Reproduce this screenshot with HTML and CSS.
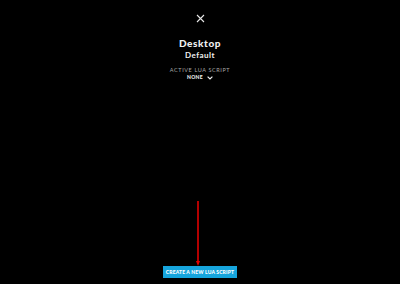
FILE: index.html
```html
<!DOCTYPE html>
<html>
<head>
<meta charset="utf-8">
<link rel="stylesheet" href="styles.css">
</head>
<body>
<div class="screen">
  <div class="close">
    <svg width="9" height="9" viewBox="0 0 9 9"><path d="M1 1L8 8M8 1L1 8" stroke="#e8e8e8" stroke-width="1.1" fill="none"/></svg>
  </div>
  <div class="title">Desktop</div>
  <div class="subtitle">Default</div>
  <div class="label">ACTIVE LUA SCRIPT</div>
  <div class="select">NONE
    <svg class="chev" width="6" height="4" viewBox="0 0 6 4"><path d="M0.6 0.6L3 3L5.4 0.6" stroke="#f0f0f0" stroke-width="1.2" fill="none"/></svg>
  </div>
  <div class="bottom">
    <svg class="arrow" width="6" height="66" viewBox="0 0 6 66"><path d="M3 0V62" stroke="#e00000" stroke-width="1.6"/><path d="M1 60L3 65L5 60Z" fill="#e00000"/></svg>
    <button class="create">CREATE A NEW LUA SCRIPT</button>
  </div>
</div>
</body>
</html>
```
FILE: styles.css
```css
html, body {
  margin: 0;
  padding: 0;
  background: #000;
}
.screen {
  width: 400px;
  height: 284px;
  display: flex;
  flex-direction: column;
  align-items: center;
  font-family: "Lato", "Open Sans", sans-serif;
  color: #f0f0f0;
  box-sizing: border-box;
  padding-top: 13px;
}
.close {
  height: 10px;
  display: flex;
  align-items: center;
  justify-content: center;
}
.close svg { display: block; }
.title {
  margin-top: 14px;
  font-size: 10px;
  font-weight: 900;
  letter-spacing: 0.6px;
  line-height: 12px;
}
.subtitle {
  margin-top: 1px;
  font-size: 8px;
  font-weight: 700;
  letter-spacing: 0.5px;
  line-height: 10px;
}
.label {
  margin-top: 7px;
  font-size: 5.5px;
  color: #a8a8a8;
  letter-spacing: 0.6px;
  line-height: 7px;
}
.select {
  font-size: 5px;
  font-weight: 900;
  letter-spacing: 0.3px;
  line-height: 7px;
  display: flex;
  align-items: center;
  gap: 4px;
}
.chev { display: block; }
.bottom {
  margin-top: auto;
  margin-bottom: 6px;
  position: relative;
  display: flex;
  flex-direction: column;
  align-items: center;
}
.arrow {
  position: absolute;
  left: 50%;
  margin-left: -5px;
  bottom: 11px;
  display: block;
}
.create {
  border: none;
  background: #16a5dd;
  color: #fff;
  font-family: "Lato", sans-serif;
  font-size: 5px;
  font-weight: 900;
  letter-spacing: 0.15px;
  white-space: nowrap;
  width: 74px;
  height: 12px;
  padding: 0;
}
```
